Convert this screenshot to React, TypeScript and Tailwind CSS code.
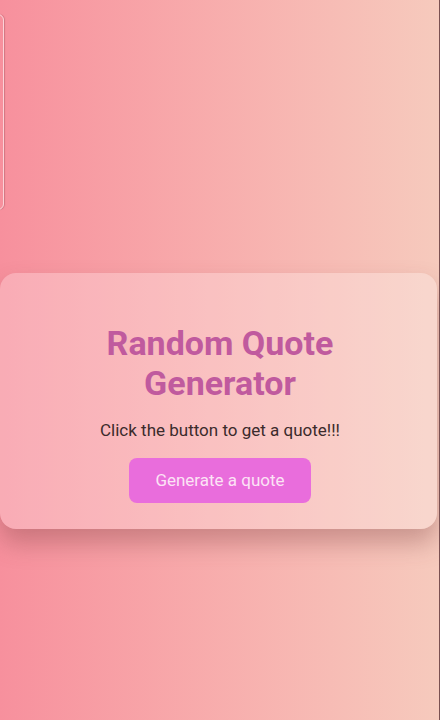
export default function App() {
  return (
    <div
      className="relative h-[720px] w-full overflow-hidden bg-gradient-to-r from-[#f7909d] to-[#f6cabd] border-r border-[#7a5052]"
      style={{ fontFamily: 'Roboto, "Noto Sans", sans-serif' }}
    >
      <div className="absolute left-[-12px] top-[14px] h-[196px] w-[16px] rounded-md border border-white/60 shadow-[1px_0_1px_rgba(150,80,90,0.4)]" />
      <div className="flex h-full flex-col pt-[273px]">
        <div className="flex h-[256px] w-[437px] flex-col items-center rounded-2xl bg-white/25 pl-[3px] pt-[50px] shadow-[0_14px_24px_rgba(120,60,60,0.35)]">
          <h1 className="text-center text-[34px] font-bold leading-[40px] text-[#c05a9e]">
            Random Quote
            <br />
            Generator
          </h1>
          <p className="mt-[14px] text-[17px] leading-[26px] text-[#3b2b2c]">
            Click the button to get a quote!!!
          </p>
          <button className="mt-[15px] h-[45px] w-[182px] rounded-lg bg-[#e96ddc] text-[17px] text-[#fce3f5]">
            Generate a quote
          </button>
        </div>
      </div>
    </div>
  );
}
